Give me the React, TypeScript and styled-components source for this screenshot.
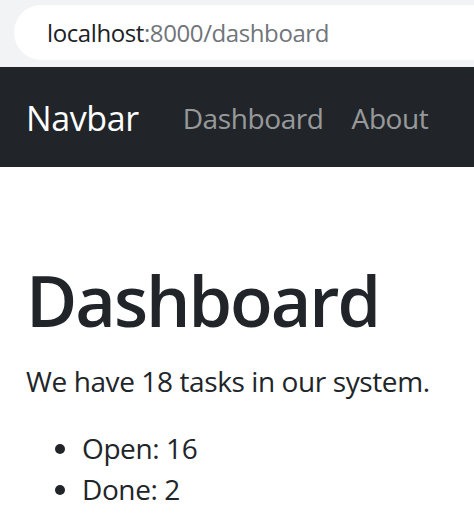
import styled, { createGlobalStyle } from "styled-components";

const GlobalStyle = createGlobalStyle`
  body {
    margin: 0;
    background: #fff;
    font-family: "Open Sans", "Noto Sans", sans-serif;
    color: #212529;
  }
`;

const Chrome = styled.div`
  height: 67px;
  background: #f1f3f4;
  padding: 5px 0 0 14px;
  box-sizing: border-box;
`;

const UrlBar = styled.div`
  height: 55px;
  background: #fff;
  border-radius: 28px 0 0 28px;
  display: flex;
  align-items: center;
  padding-left: 33px;
  font-size: 24px;
  color: #202124;
  letter-spacing: -0.4px;
`;

const UrlRest = styled.span`
  color: #70757a;
`;

const Nav = styled.nav`
  height: 100px;
  background: #212529;
  display: flex;
  align-items: center;
  padding: 2px 26px 0;
  box-sizing: border-box;
`;

const Brand = styled.a`
  color: #fff;
  font-size: 34px;
  margin-right: 30px;
  letter-spacing: -0.4px;
`;

const NavLink = styled.a`
  color: rgba(255, 255, 255, 0.55);
  font-size: 28px;
  padding: 0 14px;
  letter-spacing: -0.4px;
`;

const Main = styled.main`
  padding: 91px 26px 0;
`;

const Title = styled.h1`
  margin: 0 0 18px;
  font-size: 70px;
  font-weight: 600;
  line-height: 1.2;
  letter-spacing: -2px;
`;

const Text = styled.p`
  margin: 0 0 26px;
  font-size: 28px;
  line-height: 1.5;
  letter-spacing: -0.4px;
`;

const List = styled.ul`
  margin: 0;
  padding-left: 56px;
  font-size: 28px;
  line-height: 1.47;
  letter-spacing: -0.4px;
`;

export default function App() {
  return (
    <>
      <GlobalStyle />
      <Chrome>
        <UrlBar>
          localhost<UrlRest>:8000/dashboard</UrlRest>
        </UrlBar>
      </Chrome>
      <Nav>
        <Brand>Navbar</Brand>
        <NavLink>Dashboard</NavLink>
        <NavLink>About</NavLink>
      </Nav>
      <Main>
        <Title>Dashboard</Title>
        <Text>We have 18 tasks in our system.</Text>
        <List>
          <li>Open: 16</li>
          <li>Done: 2</li>
        </List>
      </Main>
    </>
  );
}
